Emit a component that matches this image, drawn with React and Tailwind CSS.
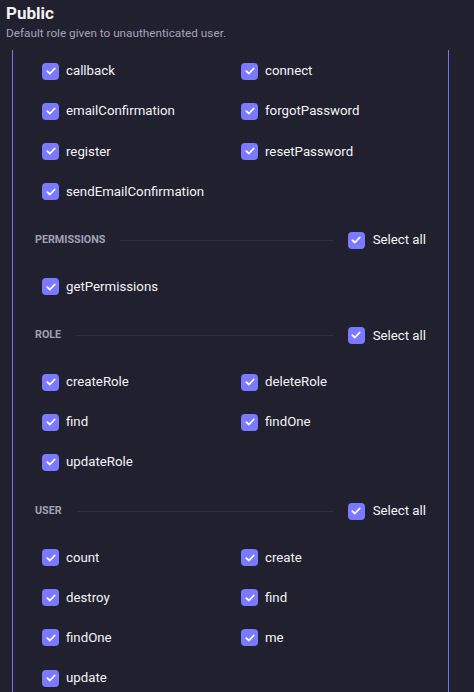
import React from "react";

function Check({ className = "" }) {
  return (
    <span
      className={
        "flex h-[17px] w-[17px] shrink-0 items-center justify-center rounded-[4px] bg-[#7b79ff] " +
        className
      }
    >
      <svg width="10" height="8" viewBox="0 0 10 8" fill="none">
        <path
          d="M1.3 4.1 L3.9 6.5 L8.7 1.5"
          stroke="white"
          strokeWidth="1.8"
          strokeLinecap="round"
          strokeLinejoin="round"
        />
      </svg>
    </span>
  );
}

function Item({ label }) {
  return (
    <div className="flex h-[40.2px] items-center gap-[7px]">
      <Check />
      <span className="text-[13.25px] text-[#f4f4f8]">{label}</span>
    </div>
  );
}

function Grid({ items }) {
  return (
    <div className="grid grid-cols-[199px_1fr] pl-[29px]">
      {items.map((it) => (
        <Item key={it} label={it} />
      ))}
    </div>
  );
}

function Section({ title, items }) {
  return (
    <div className="pt-2">
      <div className="flex h-10 items-center pl-[22px] pr-[22px] pt-px">
        <span className="text-[10.75px] font-bold uppercase text-[#a0a0b4]">{title}</span>
        <div className="mx-[15px] h-px flex-1 bg-[#2e2e45]" />
        <div className="flex items-center gap-2">
          <Check />
          <span className="text-[13.25px] text-[#f4f4f8]">Select all</span>
        </div>
      </div>
      <div className="mt-[7px]">
        <Grid items={items} />
      </div>
    </div>
  );
}

export default function App() {
  return (
    <div
      className="h-[692px] w-[474px] overflow-hidden bg-[#20202f]"
      style={{ fontFamily: "Roboto, 'Noto Sans', sans-serif" }}
    >
      <div className="px-[6px] pt-[3px]">
        <div className="text-[17px] font-bold leading-[20px] text-[#f3f3f7]">Public</div>
        <div className="mt-[2px] text-[11.75px] leading-[16px] text-[#a5a5ba]">
          Default role given to unauthenticated user.
        </div>
      </div>
      <div className="ml-[12px] mt-[9px] w-[437px] border-x border-[#7673f0] pt-px">
        <Grid
          items={[
            "callback",
            "connect",
            "emailConfirmation",
            "forgotPassword",
            "register",
            "resetPassword",
            "sendEmailConfirmation",
          ]}
        />
        <Section title="Permissions" items={["getPermissions"]} />
        <Section
          title="Role"
          items={["createRole", "deleteRole", "find", "findOne", "updateRole"]}
        />
        <Section
          title="User"
          items={["count", "create", "destroy", "find", "findOne", "me", "update"]}
        />
      </div>
    </div>
  );
}
